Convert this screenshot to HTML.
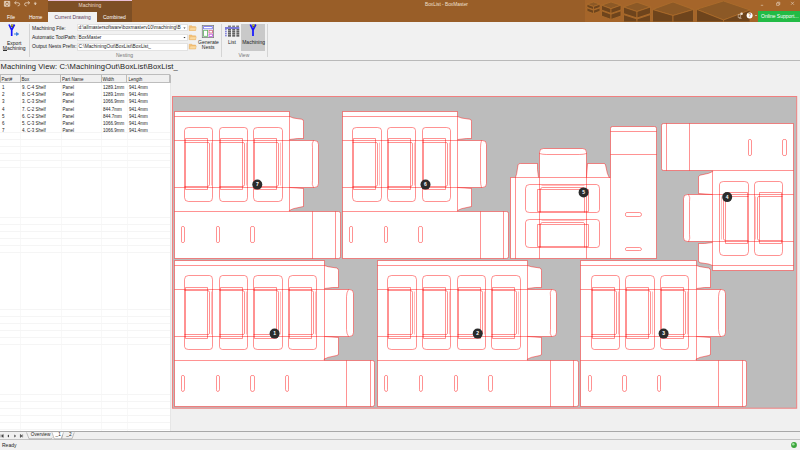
<!DOCTYPE html>
<html><head><meta charset="utf-8"><title>BoxList - BoxMaster</title>
<style>
html,body{margin:0;padding:0}
body{width:800px;height:450px;overflow:hidden;position:relative;background:#f0f0f0;font-family:"Liberation Sans",sans-serif;font-size:5px;color:#222;}
.abs,.c,span.t{position:absolute;white-space:nowrap;line-height:1}
#title{position:absolute;left:0;top:0;width:800px;height:21.8px;background:#995e28}
#deco{position:absolute;left:585px;top:0;width:215px;height:21.8px;background:#a5652a}
#ctx{position:absolute;left:47.5px;top:0;width:84.2px;height:21.8px;background:#7d4f25}
#ctxtop{position:absolute;left:47.5px;top:0;width:84.2px;height:1px;background:#e8bfd6}
#acttab{position:absolute;left:48px;top:12px;width:48.5px;height:10px;background:#f1f1f1}
.tab{color:#fff;font-size:5px}
#ribbon{position:absolute;left:0;top:21.8px;width:800px;height:38px;background:#f1f1f1;border-bottom:1px solid #b9b9b9}
.inp{position:absolute;left:77px;width:110.5px;height:7.6px;background:#fff;border:0.5px solid #e2e2e2;box-sizing:border-box}
.sep{position:absolute;top:24px;height:33px;width:0.5px;background:#d4d4d4}
.grp{color:#777}
.c{font-size:4.5px;color:#222}
.c.h{color:#222}
#tbl{position:absolute;left:0;top:74.4px;width:170px;height:357px;background:#fff;
 background-image:linear-gradient(#f3f3f3,#f3f3f3),linear-gradient(#f3f3f3,#f3f3f3),linear-gradient(#f3f3f3,#f3f3f3),linear-gradient(#f3f3f3,#f3f3f3);
 background-size:0.6px 100%;background-repeat:no-repeat;background-position:20px 0,60.5px 0,101px 0,126.5px 0;border-right:0.6px solid #e6e6e6}
#tblh{position:absolute;left:0;top:74.2px;width:170.4px;height:9.2px;background:#f0f0f0;border:0.6px solid #bdbdbd;box-sizing:border-box}
#rows{position:absolute;left:0;top:83px;width:170px;height:348px;background:repeating-linear-gradient(to bottom,transparent 0,transparent 6.58px,#f5f5f5 6.58px,#f5f5f5 7.08px)}
.draw{position:absolute;left:0;top:0}
.ln{fill:none;stroke:#ff0000;stroke-width:0.43}
.ln2{fill:none;stroke:#ff0000;stroke-width:0.25}
.dt{font-family:"Liberation Sans",sans-serif;font-size:5px;font-weight:bold;fill:#fff;text-anchor:middle}
</style></head><body>
<div id="title"></div><div id="deco"></div><div id="ctx"></div><div id="ctxtop"></div><div id="acttab"></div>
<span class="abs tab" style="left:78.5px;top:2.8px;color:#ead9c8">Machining</span>
<span class="abs tab" style="left:7px;top:14.8px">File</span>
<span class="abs tab" style="left:29px;top:14.8px">Home</span>
<span class="abs tab" style="left:54.5px;top:14.8px;color:#5a3a5a">Current Drawing</span>
<span class="abs tab" style="left:103px;top:14.8px">Combined</span>
<span class="abs tab" style="left:425px;top:2.7px;font-size:4.8px;color:#f0e0d0">BoxList - BoxMaster</span>
<div id="ribbon"></div>
<span class="abs" style="left:7px;top:40.7px">Export</span>
<span class="abs" style="left:2.8px;top:45.6px">Machining</span>
<div class="sep" style="left:28.6px"></div><div style="position:absolute;left:2.9px;top:50.2px;width:4px;height:0.5px;background:#333"></div>
<span class="abs" style="left:32px;top:26.2px">Machining File:</span>
<span class="abs" style="left:32px;top:35.2px">Automatic ToolPath:</span>
<span class="abs" style="left:32px;top:44.2px">Output Nests Prefix:</span>
<div class="inp" style="top:23.9px"></div><div class="inp" style="top:33.6px"></div><div class="inp" style="top:43.2px"></div>
<span class="abs" style="left:78.5px;top:26.3px;font-size:4.8px">d:\allmastersoftware\boxmasterv10\machining\B</span>
<span class="abs" style="left:78.5px;top:35.6px;font-size:4.8px">BoxMaster</span>
<span class="abs" style="left:78.5px;top:44.9px;font-size:4.8px">C:\MachiningOut\BoxList\BoxList_</span>
<span class="abs grp" style="left:116px;top:53.4px">Nesting</span>
<span class="abs" style="left:198px;top:40.2px">Generate</span>
<span class="abs" style="left:201.8px;top:45.4px">Nests</span>
<div class="sep" style="left:220.5px"></div>
<div style="position:absolute;left:241px;top:23.7px;width:24.4px;height:27px;background:#c9c9c9"></div>
<span class="abs" style="left:228px;top:40.2px">List</span>
<span class="abs" style="left:242.2px;top:40.2px">Machining</span>
<span class="abs grp" style="left:238.5px;top:53.4px">View</span>
<div class="sep" style="left:267px"></div>
<span class="abs" style="left:0.5px;top:63.2px;font-size:7.6px;letter-spacing:0.11px;color:#222">Machining View: C:\MachiningOut\BoxList\BoxList_</span>
<div id="tbl"></div><div id="rows"></div><div id="tblh"></div><div style="position:absolute;left:19.6px;top:74.8px;width:0.8px;height:8.2px;background:#bcbcbc"></div><div style="position:absolute;left:60.1px;top:74.8px;width:0.8px;height:8.2px;background:#bcbcbc"></div><div style="position:absolute;left:100.6px;top:74.8px;width:0.8px;height:8.2px;background:#bcbcbc"></div><div style="position:absolute;left:126.1px;top:74.8px;width:0.8px;height:8.2px;background:#bcbcbc"></div><div style="position:absolute;left:169.6px;top:74.8px;width:0.8px;height:8.2px;background:#bcbcbc"></div>
<span class="c h" style="left:1.5px;top:78px">Part#</span><span class="c h" style="left:21.5px;top:78px">Box</span><span class="c h" style="left:62px;top:78px">Part Name</span><span class="c h" style="left:102.5px;top:78px">Width</span><span class="c h" style="left:128.5px;top:78px">Length</span>
<span class="c" style="left:2.1px;top:86.30px">1</span>
<span class="c" style="left:22.1px;top:86.30px">9. C-4 Shelf</span>
<span class="c" style="left:62.6px;top:86.30px">Panel</span>
<span class="c" style="left:103.1px;top:86.30px">1289.1mm</span>
<span class="c" style="left:129.1px;top:86.30px">941.4mm</span>
<span class="c" style="left:2.1px;top:93.38px">2</span>
<span class="c" style="left:22.1px;top:93.38px">8. C-4 Shelf</span>
<span class="c" style="left:62.6px;top:93.38px">Panel</span>
<span class="c" style="left:103.1px;top:93.38px">1289.1mm</span>
<span class="c" style="left:129.1px;top:93.38px">941.4mm</span>
<span class="c" style="left:2.1px;top:100.46px">3</span>
<span class="c" style="left:22.1px;top:100.46px">3. C-3 Shelf</span>
<span class="c" style="left:62.6px;top:100.46px">Panel</span>
<span class="c" style="left:103.1px;top:100.46px">1066.9mm</span>
<span class="c" style="left:129.1px;top:100.46px">941.4mm</span>
<span class="c" style="left:2.1px;top:107.54px">4</span>
<span class="c" style="left:22.1px;top:107.54px">7. C-2 Shelf</span>
<span class="c" style="left:62.6px;top:107.54px">Panel</span>
<span class="c" style="left:103.1px;top:107.54px">844.7mm</span>
<span class="c" style="left:129.1px;top:107.54px">941.4mm</span>
<span class="c" style="left:2.1px;top:114.62px">5</span>
<span class="c" style="left:22.1px;top:114.62px">6. C-2 Shelf</span>
<span class="c" style="left:62.6px;top:114.62px">Panel</span>
<span class="c" style="left:103.1px;top:114.62px">844.7mm</span>
<span class="c" style="left:129.1px;top:114.62px">941.4mm</span>
<span class="c" style="left:2.1px;top:121.70px">6</span>
<span class="c" style="left:22.1px;top:121.70px">5. C-3 Shelf</span>
<span class="c" style="left:62.6px;top:121.70px">Panel</span>
<span class="c" style="left:103.1px;top:121.70px">1066.9mm</span>
<span class="c" style="left:129.1px;top:121.70px">941.4mm</span>
<span class="c" style="left:2.1px;top:128.78px">7</span>
<span class="c" style="left:22.1px;top:128.78px">4. C-3 Shelf</span>
<span class="c" style="left:62.6px;top:128.78px">Panel</span>
<span class="c" style="left:103.1px;top:128.78px">1066.9mm</span>
<span class="c" style="left:129.1px;top:128.78px">941.4mm</span>
<svg class="draw" width="800" height="450" viewBox="0 0 800 450">
<rect x="172.5" y="96.5" width="624.2" height="311.7" fill="#bcbcbc" stroke="#f08080" stroke-width="1"/>
<path d="M174.5,111.5L289.5,111.5L289.5,116.5L293.30,118.00L301.90,119.30Q303.5,119.5 303.5,121.5L303.5,138.5L297.5,138.5L289.5,139.5L289.5,140.5L314.5,140.5Q318.5,140.5 318.5,144.5L318.5,183.5Q318.5,187.5 314.5,187.5L289.5,187.5L303.5,188.5L303.5,206.5L301.90,206.80L293.30,208.70L289.30,210.50L289.5,211.5L338.5,211.5Q340.5,211.5 340.5,213.5L340.5,256.5Q340.5,258.5 338.5,258.5L174.5,258.5Z" fill="#fff"/>
<path d="M174.5,111.5L289.5,111.5L289.5,116.5L293.30,118.00L301.90,119.30Q303.5,119.5 303.5,121.5L303.5,138.5L297.5,138.5L289.5,139.5L289.5,140.5L314.5,140.5Q318.5,140.5 318.5,144.5L318.5,183.5Q318.5,187.5 314.5,187.5L289.5,187.5L303.5,188.5L303.5,206.5L301.90,206.80L293.30,208.70L289.30,210.50L289.5,211.5L338.5,211.5Q340.5,211.5 340.5,213.5L340.5,256.5Q340.5,258.5 338.5,258.5L174.5,258.5ZM174.5,116.5L289.5,116.5M289.5,116.5L289.5,139.5M289.5,140.5L289.5,187.5M289.5,187.5L289.5,210.5M174.5,140.5L289.5,140.5M174.5,187.5L289.5,187.5M174.5,211.5L289.5,211.5M312.5,211.5L312.5,258.5M335.5,211.5L335.5,258.5M313.5,140.5Q311.5,143.5 312.5,147.5L312.5,180.5Q311.5,184.5 313.5,187.5M188.5,127.5L209.5,127.5Q212.5,127.5 212.5,130.5L212.5,197.5Q212.5,201.5 209.5,201.5L188.5,201.5Q184.5,201.5 184.5,197.5L184.5,130.5Q184.5,127.5 188.5,127.5ZM185.5,138.5L207.5,138.5L207.5,189.5L185.5,189.5ZM184.5,142.5L207.5,142.5Q209.5,142.5 209.5,143.5L209.5,184.5Q209.5,186.5 207.5,186.5L184.5,186.5M182.5,226.5Q184.5,226.5 184.5,227.5L184.5,241.5Q184.5,242.5 182.5,242.5Q181.5,242.5 181.5,241.5L181.5,227.5Q181.5,226.5 182.5,226.5ZM222.5,127.5L244.5,127.5Q247.5,127.5 247.5,130.5L247.5,197.5Q247.5,201.5 244.5,201.5L222.5,201.5Q219.5,201.5 219.5,197.5L219.5,130.5Q219.5,127.5 222.5,127.5ZM220.5,138.5L242.5,138.5L242.5,189.5L220.5,189.5ZM219.5,142.5L242.5,142.5Q244.5,142.5 244.5,143.5L244.5,184.5Q244.5,186.5 242.5,186.5L219.5,186.5M217.5,226.5Q219.5,226.5 219.5,227.5L219.5,241.5Q219.5,242.5 217.5,242.5Q216.5,242.5 216.5,241.5L216.5,227.5Q216.5,226.5 217.5,226.5ZM257.5,127.5L278.5,127.5Q282.5,127.5 282.5,130.5L282.5,197.5Q282.5,201.5 278.5,201.5L257.5,201.5Q253.5,201.5 253.5,197.5L253.5,130.5Q253.5,127.5 257.5,127.5ZM254.5,138.5L276.5,138.5L276.5,189.5L254.5,189.5ZM253.5,142.5L276.5,142.5Q278.5,142.5 278.5,143.5L278.5,184.5Q278.5,186.5 276.5,186.5L253.5,186.5M252.5,226.5Q254.5,226.5 254.5,227.5L254.5,241.5Q254.5,242.5 252.5,242.5Q250.5,242.5 250.5,241.5L250.5,227.5Q250.5,226.5 252.5,226.5Z" class="ln"/>
<path d="M211.5,142.5L211.5,185.5M246.5,142.5L246.5,185.5M280.5,142.5L280.5,185.5" class="ln2"/>
<path d="M342.5,111.5L457.5,111.5L457.5,116.5L461.50,118.00L470.10,119.30Q471.5,119.5 471.5,121.5L471.5,138.5L466.5,138.5L457.5,139.5L457.5,140.5L482.5,140.5Q486.5,140.5 486.5,144.5L486.5,183.5Q486.5,187.5 482.5,187.5L457.5,187.5L471.5,188.5L471.5,206.5L470.10,206.80L461.50,208.70L457.50,210.50L457.5,211.5L506.5,211.5Q508.5,211.5 508.5,213.5L508.5,256.5Q508.5,258.5 506.5,258.5L342.5,258.5Z" fill="#fff"/>
<path d="M342.5,111.5L457.5,111.5L457.5,116.5L461.50,118.00L470.10,119.30Q471.5,119.5 471.5,121.5L471.5,138.5L466.5,138.5L457.5,139.5L457.5,140.5L482.5,140.5Q486.5,140.5 486.5,144.5L486.5,183.5Q486.5,187.5 482.5,187.5L457.5,187.5L471.5,188.5L471.5,206.5L470.10,206.80L461.50,208.70L457.50,210.50L457.5,211.5L506.5,211.5Q508.5,211.5 508.5,213.5L508.5,256.5Q508.5,258.5 506.5,258.5L342.5,258.5ZM342.5,116.5L457.5,116.5M457.5,116.5L457.5,139.5M457.5,140.5L457.5,187.5M457.5,187.5L457.5,210.5M342.5,140.5L457.5,140.5M342.5,187.5L457.5,187.5M342.5,211.5L457.5,211.5M480.5,211.5L480.5,258.5M503.5,211.5L503.5,258.5M481.5,140.5Q480.5,143.5 480.5,147.5L480.5,180.5Q480.5,184.5 481.5,187.5M356.5,127.5L377.5,127.5Q381.5,127.5 381.5,130.5L381.5,197.5Q381.5,201.5 377.5,201.5L356.5,201.5Q352.5,201.5 352.5,197.5L352.5,130.5Q352.5,127.5 356.5,127.5ZM353.5,138.5L375.5,138.5L375.5,189.5L353.5,189.5ZM352.5,142.5L375.5,142.5Q377.5,142.5 377.5,143.5L377.5,184.5Q377.5,186.5 375.5,186.5L352.5,186.5M351.5,226.5Q352.5,226.5 352.5,227.5L352.5,241.5Q352.5,242.5 351.5,242.5Q349.5,242.5 349.5,241.5L349.5,227.5Q349.5,226.5 351.5,226.5ZM390.5,127.5L412.5,127.5Q415.5,127.5 415.5,130.5L415.5,197.5Q415.5,201.5 412.5,201.5L390.5,201.5Q387.5,201.5 387.5,197.5L387.5,130.5Q387.5,127.5 390.5,127.5ZM388.5,138.5L410.5,138.5L410.5,189.5L388.5,189.5ZM387.5,142.5L410.5,142.5Q412.5,142.5 412.5,143.5L412.5,184.5Q412.5,186.5 410.5,186.5L387.5,186.5M385.5,226.5Q387.5,226.5 387.5,227.5L387.5,241.5Q387.5,242.5 385.5,242.5Q384.5,242.5 384.5,241.5L384.5,227.5Q384.5,226.5 385.5,226.5ZM425.5,127.5L446.5,127.5Q450.5,127.5 450.5,130.5L450.5,197.5Q450.5,201.5 446.5,201.5L425.5,201.5Q422.5,201.5 422.5,197.5L422.5,130.5Q422.5,127.5 425.5,127.5ZM423.5,138.5L445.5,138.5L445.5,189.5L423.5,189.5ZM422.5,142.5L445.5,142.5Q447.5,142.5 447.5,143.5L447.5,184.5Q447.5,186.5 445.5,186.5L422.5,186.5M420.5,226.5Q422.5,226.5 422.5,227.5L422.5,241.5Q422.5,242.5 420.5,242.5Q418.5,242.5 418.5,241.5L418.5,227.5Q418.5,226.5 420.5,226.5Z" class="ln"/>
<path d="M379.5,142.5L379.5,185.5M414.5,142.5L414.5,185.5M449.5,142.5L449.5,185.5" class="ln2"/>
<path d="M510.5,258.5L510.5,177.5L515.5,177.5L516.70,173.50L518.00,164.90Q518.5,163.5 520.5,163.5L537.5,163.5L537.5,169.5L538.5,177.5L539.5,177.5L539.5,152.5Q539.5,148.5 543.5,148.5L582.5,148.5Q586.5,148.5 586.5,152.5L586.5,177.5L587.5,163.5L604.5,163.5L605.50,164.90L607.40,173.50L609.20,177.50L610.5,177.5L610.5,128.5Q610.5,126.5 612.5,126.5L654.5,126.5Q656.5,126.5 656.5,128.5L656.5,258.5Z" fill="#fff"/>
<path d="M510.5,258.5L510.5,177.5L515.5,177.5L516.70,173.50L518.00,164.90Q518.5,163.5 520.5,163.5L537.5,163.5L537.5,169.5L538.5,177.5L539.5,177.5L539.5,152.5Q539.5,148.5 543.5,148.5L582.5,148.5Q586.5,148.5 586.5,152.5L586.5,177.5L587.5,163.5L604.5,163.5L605.50,164.90L607.40,173.50L609.20,177.50L610.5,177.5L610.5,128.5Q610.5,126.5 612.5,126.5L654.5,126.5Q656.5,126.5 656.5,128.5L656.5,258.5ZM515.5,258.5L515.5,177.5M515.5,177.5L538.5,177.5M539.5,177.5L586.5,177.5M586.5,177.5L609.5,177.5M539.5,258.5L539.5,177.5M586.5,258.5L586.5,177.5M610.5,258.5L610.5,177.5M610.5,154.5L656.5,154.5M610.5,131.5L656.5,131.5M539.5,153.5Q542.5,154.5 546.5,154.5L579.5,154.5Q583.5,154.5 586.5,153.5M525.5,244.5L525.5,222.5Q525.5,219.5 529.5,219.5L596.5,219.5Q599.5,219.5 599.5,222.5L599.5,244.5Q599.5,247.5 596.5,247.5L529.5,247.5Q525.5,247.5 525.5,244.5ZM537.5,246.5L537.5,224.5L588.5,224.5L588.5,246.5ZM540.5,247.5L540.5,224.5Q540.5,222.5 542.5,222.5L583.5,222.5Q584.5,222.5 584.5,224.5L584.5,247.5M625.5,249.5Q625.5,247.5 626.5,247.5L639.5,247.5Q641.5,247.5 641.5,249.5Q641.5,250.5 639.5,250.5L626.5,250.5Q625.5,250.5 625.5,249.5ZM525.5,209.5L525.5,188.5Q525.5,184.5 529.5,184.5L596.5,184.5Q599.5,184.5 599.5,188.5L599.5,209.5Q599.5,212.5 596.5,212.5L529.5,212.5Q525.5,212.5 525.5,209.5ZM537.5,211.5L537.5,189.5L588.5,189.5L588.5,211.5ZM540.5,212.5L540.5,189.5Q540.5,187.5 542.5,187.5L583.5,187.5Q584.5,187.5 584.5,189.5L584.5,212.5M625.5,214.5Q625.5,212.5 626.5,212.5L639.5,212.5Q641.5,212.5 641.5,214.5Q641.5,216.5 639.5,216.5L626.5,216.5Q625.5,216.5 625.5,214.5Z" class="ln"/>
<path d="M541.5,220.5L584.5,220.5M541.5,185.5L584.5,185.5" class="ln2"/>
<path d="M793.5,270.5L712.5,270.5L712.5,265.5L708.70,264.00L700.10,262.70Q698.5,262.5 698.5,260.5L698.5,243.5L704.5,243.5L712.5,242.5L712.5,241.5L687.5,241.5Q683.5,241.5 683.5,237.5L683.5,198.5Q683.5,194.5 687.5,194.5L712.5,194.5L698.5,193.5L698.5,176.5L700.10,175.20L708.70,173.30L712.70,171.50L712.5,170.5L663.5,170.5Q661.5,170.5 661.5,168.5L661.5,125.5Q661.5,123.5 663.5,123.5L793.5,123.5Z" fill="#fff"/>
<path d="M793.5,270.5L712.5,270.5L712.5,265.5L708.70,264.00L700.10,262.70Q698.5,262.5 698.5,260.5L698.5,243.5L704.5,243.5L712.5,242.5L712.5,241.5L687.5,241.5Q683.5,241.5 683.5,237.5L683.5,198.5Q683.5,194.5 687.5,194.5L712.5,194.5L698.5,193.5L698.5,176.5L700.10,175.20L708.70,173.30L712.70,171.50L712.5,170.5L663.5,170.5Q661.5,170.5 661.5,168.5L661.5,125.5Q661.5,123.5 663.5,123.5L793.5,123.5ZM793.5,265.5L712.5,265.5M712.5,265.5L712.5,242.5M712.5,241.5L712.5,194.5M712.5,194.5L712.5,171.5M793.5,241.5L712.5,241.5M793.5,194.5L712.5,194.5M793.5,170.5L712.5,170.5M689.5,170.5L689.5,123.5M666.5,170.5L666.5,123.5M688.5,241.5Q690.5,238.5 689.5,234.5L689.5,201.5Q690.5,197.5 688.5,194.5M779.5,255.5L758.5,255.5Q754.5,255.5 754.5,251.5L754.5,184.5Q754.5,181.5 758.5,181.5L779.5,181.5Q782.5,181.5 782.5,184.5L782.5,251.5Q782.5,255.5 779.5,255.5ZM781.5,243.5L759.5,243.5L759.5,192.5L781.5,192.5ZM782.5,240.5L759.5,240.5Q757.5,240.5 757.5,238.5L757.5,197.5Q757.5,196.5 759.5,196.5L782.5,196.5M784.5,155.5Q782.5,155.5 782.5,154.5L782.5,140.5Q782.5,139.5 784.5,139.5Q786.5,139.5 786.5,140.5L786.5,154.5Q786.5,155.5 784.5,155.5ZM744.5,255.5L723.5,255.5Q719.5,255.5 719.5,251.5L719.5,184.5Q719.5,181.5 723.5,181.5L744.5,181.5Q748.5,181.5 748.5,184.5L748.5,251.5Q748.5,255.5 744.5,255.5ZM747.5,243.5L725.5,243.5L725.5,192.5L747.5,192.5ZM748.5,240.5L725.5,240.5Q723.5,240.5 723.5,238.5L723.5,197.5Q723.5,196.5 725.5,196.5L748.5,196.5M749.5,155.5Q748.5,155.5 748.5,154.5L748.5,140.5Q748.5,139.5 749.5,139.5Q751.5,139.5 751.5,140.5L751.5,154.5Q751.5,155.5 749.5,155.5Z" class="ln"/>
<path d="M755.5,239.5L755.5,196.5M721.5,239.5L721.5,196.5" class="ln2"/>
<path d="M174.5,260.5L324.5,260.5L324.5,265.5L328.00,266.70L336.60,268.00Q338.5,268.5 338.5,270.5L338.5,287.5L332.5,287.5L324.5,288.5L324.5,289.5L349.5,289.5Q353.5,289.5 353.5,293.5L353.5,332.5Q353.5,336.5 349.5,336.5L324.5,336.5L338.5,337.5L338.5,354.5L336.60,355.50L328.00,357.40L324.00,359.20L324.5,360.5L372.5,360.5Q374.5,360.5 374.5,362.5L374.5,404.5Q374.5,406.5 372.5,406.5L174.5,406.5Z" fill="#fff"/>
<path d="M174.5,260.5L324.5,260.5L324.5,265.5L328.00,266.70L336.60,268.00Q338.5,268.5 338.5,270.5L338.5,287.5L332.5,287.5L324.5,288.5L324.5,289.5L349.5,289.5Q353.5,289.5 353.5,293.5L353.5,332.5Q353.5,336.5 349.5,336.5L324.5,336.5L338.5,337.5L338.5,354.5L336.60,355.50L328.00,357.40L324.00,359.20L324.5,360.5L372.5,360.5Q374.5,360.5 374.5,362.5L374.5,404.5Q374.5,406.5 372.5,406.5L174.5,406.5ZM174.5,265.5L324.5,265.5M324.5,265.5L324.5,288.5M324.5,289.5L324.5,336.5M324.5,336.5L324.5,359.5M174.5,289.5L324.5,289.5M174.5,336.5L324.5,336.5M174.5,360.5L324.5,360.5M346.5,360.5L346.5,406.5M370.5,360.5L370.5,406.5M348.5,289.5Q346.5,292.5 346.5,296.5L346.5,329.5Q346.5,333.5 348.5,336.5M188.5,275.5L209.5,275.5Q212.5,275.5 212.5,279.5L212.5,346.5Q212.5,349.5 209.5,349.5L188.5,349.5Q184.5,349.5 184.5,346.5L184.5,279.5Q184.5,275.5 188.5,275.5ZM185.5,287.5L207.5,287.5L207.5,338.5L185.5,338.5ZM184.5,290.5L207.5,290.5Q209.5,290.5 209.5,292.5L209.5,333.5Q209.5,334.5 207.5,334.5L184.5,334.5M182.5,375.5Q184.5,375.5 184.5,376.5L184.5,389.5Q184.5,391.5 182.5,391.5Q181.5,391.5 181.5,389.5L181.5,376.5Q181.5,375.5 182.5,375.5ZM222.5,275.5L244.5,275.5Q247.5,275.5 247.5,279.5L247.5,346.5Q247.5,349.5 244.5,349.5L222.5,349.5Q219.5,349.5 219.5,346.5L219.5,279.5Q219.5,275.5 222.5,275.5ZM220.5,287.5L242.5,287.5L242.5,338.5L220.5,338.5ZM219.5,290.5L242.5,290.5Q244.5,290.5 244.5,292.5L244.5,333.5Q244.5,334.5 242.5,334.5L219.5,334.5M217.5,375.5Q219.5,375.5 219.5,376.5L219.5,389.5Q219.5,391.5 217.5,391.5Q216.5,391.5 216.5,389.5L216.5,376.5Q216.5,375.5 217.5,375.5ZM257.5,275.5L278.5,275.5Q282.5,275.5 282.5,279.5L282.5,346.5Q282.5,349.5 278.5,349.5L257.5,349.5Q253.5,349.5 253.5,346.5L253.5,279.5Q253.5,275.5 257.5,275.5ZM254.5,287.5L276.5,287.5L276.5,338.5L254.5,338.5ZM253.5,290.5L276.5,290.5Q278.5,290.5 278.5,292.5L278.5,333.5Q278.5,334.5 276.5,334.5L253.5,334.5M252.5,375.5Q254.5,375.5 254.5,376.5L254.5,389.5Q254.5,391.5 252.5,391.5Q250.5,391.5 250.5,389.5L250.5,376.5Q250.5,375.5 252.5,375.5ZM292.5,275.5L313.5,275.5Q316.5,275.5 316.5,279.5L316.5,346.5Q316.5,349.5 313.5,349.5L292.5,349.5Q288.5,349.5 288.5,346.5L288.5,279.5Q288.5,275.5 292.5,275.5ZM289.5,287.5L311.5,287.5L311.5,338.5L289.5,338.5ZM288.5,290.5L311.5,290.5Q313.5,290.5 313.5,292.5L313.5,333.5Q313.5,334.5 311.5,334.5L288.5,334.5M287.5,375.5Q288.5,375.5 288.5,376.5L288.5,389.5Q288.5,391.5 287.5,391.5Q285.5,391.5 285.5,389.5L285.5,376.5Q285.5,375.5 287.5,375.5Z" class="ln"/>
<path d="M211.5,291.5L211.5,334.5M246.5,291.5L246.5,334.5M280.5,291.5L280.5,334.5M315.5,291.5L315.5,334.5" class="ln2"/>
<path d="M377.5,260.5L527.5,260.5L527.5,265.5L531.30,266.70L539.90,268.00Q541.5,268.5 541.5,270.5L541.5,287.5L535.5,287.5L527.5,288.5L527.5,289.5L552.5,289.5Q556.5,289.5 556.5,293.5L556.5,332.5Q556.5,336.5 552.5,336.5L527.5,336.5L541.5,337.5L541.5,354.5L539.90,355.50L531.30,357.40L527.30,359.20L527.5,360.5L576.5,360.5Q578.5,360.5 578.5,362.5L578.5,404.5Q578.5,406.5 576.5,406.5L377.5,406.5Z" fill="#fff"/>
<path d="M377.5,260.5L527.5,260.5L527.5,265.5L531.30,266.70L539.90,268.00Q541.5,268.5 541.5,270.5L541.5,287.5L535.5,287.5L527.5,288.5L527.5,289.5L552.5,289.5Q556.5,289.5 556.5,293.5L556.5,332.5Q556.5,336.5 552.5,336.5L527.5,336.5L541.5,337.5L541.5,354.5L539.90,355.50L531.30,357.40L527.30,359.20L527.5,360.5L576.5,360.5Q578.5,360.5 578.5,362.5L578.5,404.5Q578.5,406.5 576.5,406.5L377.5,406.5ZM377.5,265.5L527.5,265.5M527.5,265.5L527.5,288.5M527.5,289.5L527.5,336.5M527.5,336.5L527.5,359.5M377.5,289.5L527.5,289.5M377.5,336.5L527.5,336.5M377.5,360.5L527.5,360.5M550.5,360.5L550.5,406.5M573.5,360.5L573.5,406.5M551.5,289.5Q549.5,292.5 550.5,296.5L550.5,329.5Q549.5,333.5 551.5,336.5M391.5,275.5L412.5,275.5Q416.5,275.5 416.5,279.5L416.5,346.5Q416.5,349.5 412.5,349.5L391.5,349.5Q387.5,349.5 387.5,346.5L387.5,279.5Q387.5,275.5 391.5,275.5ZM388.5,287.5L410.5,287.5L410.5,338.5L388.5,338.5ZM387.5,290.5L410.5,290.5Q412.5,290.5 412.5,292.5L412.5,333.5Q412.5,334.5 410.5,334.5L387.5,334.5M386.5,375.5Q387.5,375.5 387.5,376.5L387.5,389.5Q387.5,391.5 386.5,391.5Q384.5,391.5 384.5,389.5L384.5,376.5Q384.5,375.5 386.5,375.5ZM426.5,275.5L447.5,275.5Q450.5,275.5 450.5,279.5L450.5,346.5Q450.5,349.5 447.5,349.5L426.5,349.5Q422.5,349.5 422.5,346.5L422.5,279.5Q422.5,275.5 426.5,275.5ZM423.5,287.5L445.5,287.5L445.5,338.5L423.5,338.5ZM422.5,290.5L445.5,290.5Q447.5,290.5 447.5,292.5L447.5,333.5Q447.5,334.5 445.5,334.5L422.5,334.5M420.5,375.5Q422.5,375.5 422.5,376.5L422.5,389.5Q422.5,391.5 420.5,391.5Q419.5,391.5 419.5,389.5L419.5,376.5Q419.5,375.5 420.5,375.5ZM460.5,275.5L482.5,275.5Q485.5,275.5 485.5,279.5L485.5,346.5Q485.5,349.5 482.5,349.5L460.5,349.5Q457.5,349.5 457.5,346.5L457.5,279.5Q457.5,275.5 460.5,275.5ZM458.5,287.5L480.5,287.5L480.5,338.5L458.5,338.5ZM457.5,290.5L480.5,290.5Q482.5,290.5 482.5,292.5L482.5,333.5Q482.5,334.5 480.5,334.5L457.5,334.5M455.5,375.5Q457.5,375.5 457.5,376.5L457.5,389.5Q457.5,391.5 455.5,391.5Q454.5,391.5 454.5,389.5L454.5,376.5Q454.5,375.5 455.5,375.5ZM495.5,275.5L516.5,275.5Q520.5,275.5 520.5,279.5L520.5,346.5Q520.5,349.5 516.5,349.5L495.5,349.5Q491.5,349.5 491.5,346.5L491.5,279.5Q491.5,275.5 495.5,275.5ZM492.5,287.5L514.5,287.5L514.5,338.5L492.5,338.5ZM491.5,290.5L514.5,290.5Q516.5,290.5 516.5,292.5L516.5,333.5Q516.5,334.5 514.5,334.5L491.5,334.5M490.5,375.5Q492.5,375.5 492.5,376.5L492.5,389.5Q492.5,391.5 490.5,391.5Q488.5,391.5 488.5,389.5L488.5,376.5Q488.5,375.5 490.5,375.5Z" class="ln"/>
<path d="M414.5,291.5L414.5,334.5M449.5,291.5L449.5,334.5M484.5,291.5L484.5,334.5M518.5,291.5L518.5,334.5" class="ln2"/>
<path d="M580.5,260.5L696.5,260.5L696.5,265.5L700.00,266.70L708.60,268.00Q710.5,268.5 710.5,270.5L710.5,287.5L704.5,287.5L696.5,288.5L696.5,289.5L721.5,289.5Q725.5,289.5 725.5,293.5L725.5,332.5Q725.5,336.5 721.5,336.5L696.5,336.5L710.5,337.5L710.5,354.5L708.60,355.50L700.00,357.40L696.00,359.20L696.5,360.5L744.5,360.5Q746.5,360.5 746.5,362.5L746.5,404.5Q746.5,406.5 744.5,406.5L580.5,406.5Z" fill="#fff"/>
<path d="M580.5,260.5L696.5,260.5L696.5,265.5L700.00,266.70L708.60,268.00Q710.5,268.5 710.5,270.5L710.5,287.5L704.5,287.5L696.5,288.5L696.5,289.5L721.5,289.5Q725.5,289.5 725.5,293.5L725.5,332.5Q725.5,336.5 721.5,336.5L696.5,336.5L710.5,337.5L710.5,354.5L708.60,355.50L700.00,357.40L696.00,359.20L696.5,360.5L744.5,360.5Q746.5,360.5 746.5,362.5L746.5,404.5Q746.5,406.5 744.5,406.5L580.5,406.5ZM580.5,265.5L696.5,265.5M696.5,265.5L696.5,288.5M696.5,289.5L696.5,336.5M696.5,336.5L696.5,359.5M580.5,289.5L696.5,289.5M580.5,336.5L696.5,336.5M580.5,360.5L696.5,360.5M718.5,360.5L718.5,406.5M742.5,360.5L742.5,406.5M720.5,289.5Q718.5,292.5 718.5,296.5L718.5,329.5Q718.5,333.5 720.5,336.5M594.5,275.5L616.5,275.5Q619.5,275.5 619.5,279.5L619.5,346.5Q619.5,349.5 616.5,349.5L594.5,349.5Q591.5,349.5 591.5,346.5L591.5,279.5Q591.5,275.5 594.5,275.5ZM592.5,287.5L614.5,287.5L614.5,338.5L592.5,338.5ZM591.5,290.5L614.5,290.5Q616.5,290.5 616.5,292.5L616.5,333.5Q616.5,334.5 614.5,334.5L591.5,334.5M589.5,375.5Q591.5,375.5 591.5,376.5L591.5,389.5Q591.5,391.5 589.5,391.5Q588.5,391.5 588.5,389.5L588.5,376.5Q588.5,375.5 589.5,375.5ZM629.5,275.5L650.5,275.5Q654.5,275.5 654.5,279.5L654.5,346.5Q654.5,349.5 650.5,349.5L629.5,349.5Q625.5,349.5 625.5,346.5L625.5,279.5Q625.5,275.5 629.5,275.5ZM626.5,287.5L648.5,287.5L648.5,338.5L626.5,338.5ZM625.5,290.5L648.5,290.5Q650.5,290.5 650.5,292.5L650.5,333.5Q650.5,334.5 648.5,334.5L625.5,334.5M624.5,375.5Q626.5,375.5 626.5,376.5L626.5,389.5Q626.5,391.5 624.5,391.5Q622.5,391.5 622.5,389.5L622.5,376.5Q622.5,375.5 624.5,375.5ZM664.5,275.5L685.5,275.5Q688.5,275.5 688.5,279.5L688.5,346.5Q688.5,349.5 685.5,349.5L664.5,349.5Q660.5,349.5 660.5,346.5L660.5,279.5Q660.5,275.5 664.5,275.5ZM661.5,287.5L683.5,287.5L683.5,338.5L661.5,338.5ZM660.5,290.5L683.5,290.5Q685.5,290.5 685.5,292.5L685.5,333.5Q685.5,334.5 683.5,334.5L660.5,334.5M659.5,375.5Q660.5,375.5 660.5,376.5L660.5,389.5Q660.5,391.5 659.5,391.5Q657.5,391.5 657.5,389.5L657.5,376.5Q657.5,375.5 659.5,375.5Z" class="ln"/>
<path d="M618.5,291.5L618.5,334.5M652.5,291.5L652.5,334.5M687.5,291.5L687.5,334.5" class="ln2"/>
<circle cx="257.3" cy="184.6" r="5" fill="#2b2b2b"/><text x="257.3" y="186.29999999999998" class="dt">7</text>
<circle cx="425.5" cy="184.6" r="5" fill="#2b2b2b"/><text x="425.5" y="186.29999999999998" class="dt">6</text>
<circle cx="583.6" cy="192.4" r="5" fill="#2b2b2b"/><text x="583.6" y="194.1" class="dt">5</text>
<circle cx="727.2" cy="197.1" r="5" fill="#2b2b2b"/><text x="727.2" y="198.79999999999998" class="dt">4</text>
<circle cx="274.6" cy="333.6" r="5" fill="#2b2b2b"/><text x="274.6" y="335.3" class="dt">1</text>
<circle cx="477.7" cy="333.6" r="5" fill="#2b2b2b"/><text x="477.7" y="335.3" class="dt">2</text>
<circle cx="663.6" cy="333.6" r="5" fill="#2b2b2b"/><text x="663.6" y="335.3" class="dt">3</text>
</svg>
<div style="position:absolute;left:0;top:431.2px;width:800px;height:1.2px;background:#a8a8a8"></div>
<div style="position:absolute;left:0;top:432.4px;width:800px;height:7.2px;background:#f0f0f0"></div>
<div style="position:absolute;left:0;top:439.2px;width:800px;height:0.9px;background:#c4c4c4"></div>
<div style="position:absolute;left:0;top:440.3px;width:800px;height:9.7px;background:#f1f1f1"></div>
<span class="abs" style="left:2px;top:443px">Ready</span>
<div style="position:absolute;left:758.3px;top:11px;width:41.7px;height:10.5px;background:#22bb46"></div>
<span class="abs" style="left:761px;top:13.8px;color:#fff;font-size:5px">Online Support...</span>
<svg class="draw" width="800" height="450" viewBox="0 0 800 450">
<!-- deco boxes -->
<clipPath id="tc"><rect x="0" y="0" width="800" height="21.8"/></clipPath><g clip-path="url(#tc)" fill="#6e441c" stroke="#ad6d2c" stroke-width="0.8" stroke-linejoin="round">
<path d="M587,4.2 L593.5,2 L600,4.2 L593.5,6.5 Z" fill="#8c5926"/><path d="M587,4.2 L593.5,6.5 V9.6 L587,7.3 Z"/><path d="M593.5,6.5 L600,4.2 V7.3 L593.5,9.6 Z"/>
<path d="M587,7.9 L593.5,10.2 V13.6 L587,11.2 Z"/><path d="M593.5,10.2 L600,7.9 V11.2 L593.5,13.6 Z"/>
<path d="M601.5,5.2 L611,2 L621,5.2 L611,8.7 Z" fill="#8c5926"/><path d="M601.5,5.2 L611,8.7 V13.4 L601.5,10 Z"/><path d="M611,8.7 L621,5.2 V10 L611,13.4 Z"/>
<path d="M601.5,10.8 L611,14.2 V19.4 L601.5,16 Z"/><path d="M611,14.2 L621,10.8 V16 L611,19.4 Z"/>
<path d="M623.5,7 L637,2.2 L650.5,7 L637,11.5 Z" fill="#8c5926"/><path d="M623.5,7 L637,11.5 V18 L623.5,13.6 Z"/><path d="M637,11.5 L650.5,7 V13.6 L637,18 Z"/>
<path d="M623.5,14.6 L637,19 V22 L623.5,22 Z"/><path d="M637,19 L650.5,14.6 V22 L637,22 Z"/>
<path d="M652.5,9.5 L673,2 L693.5,9.5 L673,15.5 Z" fill="#8c5926"/><path d="M652.5,9.5 L673,15.5 V22 L652.5,22 Z"/><path d="M673,15.5 L693.5,9.5 V22 L673,22 Z"/>
<path d="M696.5,9.3 L723.5,1 L750,10 L723.5,20 Z" fill="#8c5926"/><path d="M696.5,9.3 L723.5,20 V22 L696.5,22 Z"/><path d="M723.5,20 L750,10 V22 L723.5,22 Z"/>
</g>
<!-- quick access -->
<g fill="none" stroke="#f3e6d8" stroke-width="0.8">
<path d="M4.4,1.4 H9.7 V6.2 H4.4 Z M5.4,1.4 V3.3 H8.7 V1.4 M5.6,6.2 V4.6 H8.5 V6.2"/>
<path d="M14.6,2.8 H18 Q19.7,2.8 19.7,4.4 Q19.7,5.9 17.6,5.9 M16.3,1.2 L14.6,2.8 L16.3,4.4" stroke="#e8d3bd"/>
<path d="M29.6,2.8 H26.2 Q24.5,2.8 24.5,4.4 Q24.5,5.9 26.6,5.9 M27.9,1.2 L29.6,2.8 L27.9,4.4" stroke="#e8d3bd"/>
</g>
<path d="M34.4,2.4 H36.2 M34.3,3.6 H36.3 L35.3,4.8 Z" fill="#f3e6d8" stroke="#f3e6d8" stroke-width="0.5"/>
<!-- window controls -->
<g fill="none" stroke="#e6d2bd" stroke-width="0.6">
<path d="M760.8,5.3 H763.2"/>
<path d="M776.6,3 H779 V5.4 H776.6 Z M777.4,3 V2.2 H779.8 V4.6 H779"/>
<path d="M791,1.8 L794,4.8 M794,1.8 L791,4.8"/>
</g>
<!-- help -->
<path d="M738.2,14.6 H740.6 V17.6 H738.2 Z M739.4,17.6 V18.4 H741.6" fill="none" stroke="#f3e6d8" stroke-width="0.5"/>
<circle cx="741.6" cy="13.8" r="1.3" fill="#f3e6d8"/>
<circle cx="749.6" cy="15.4" r="3" fill="#fff"/>
<text x="749.6" y="17.1" font-size="4.6" font-weight="bold" text-anchor="middle" fill="#995e28" font-family="Liberation Sans, sans-serif">?</text>
<path d="M755,15 H757 L756,16.1 Z" fill="#fff"/>
<!-- export machining icon -->
<g id="yicon" transform="translate(0,-0.9)">
<path d="M9,25.4 L11.7,31 V37 M14.5,25.4 L11.7,31" fill="none" stroke="#1414ff" stroke-width="1.7" stroke-linejoin="round"/>
<rect x="11" y="25.3" width="2.3" height="2.8" fill="#6b6b2a"/><rect x="11.5" y="25.6" width="1.4" height="1.2" fill="#c8c040"/>
</g>
<path d="M14,34 H17.3 M16.5,32.6 L18.6,34 L16.5,35.4 Z" fill="#3b7fe0" stroke="#3b7fe0" stroke-width="1"/>
<use href="#yicon" x="241.3" y="0"/>
<!-- folders -->
<g id="fold"><path d="M189.2,25.8 H191.8 L192.4,26.6 H195.6 V30.4 H189.2 Z" fill="#f3c27a" stroke="#e7a750" stroke-width="0.4"/><path d="M189.2,30.4 L190.3,27.6 H196.3 L195.6,30.4 Z" fill="#fad9a0" stroke="#e7a750" stroke-width="0.3"/></g>
<use href="#fold" y="9.2"/><use href="#fold" y="18.4"/>
<!-- dropdown arrows -->
<path d="M183.4,27.6 H185.6 L184.5,28.8 Z M183.4,37 H185.6 L184.5,38.2 Z" fill="#333"/>
<!-- generate nests -->
<rect x="202.3" y="25.4" width="11.3" height="12.2" fill="#fff" stroke="#7d7d7d" stroke-width="0.8"/>
<rect x="203.6" y="26.6" width="8.7" height="2.2" fill="#fff" stroke="#6a6af0" stroke-width="0.8"/>
<rect x="203.6" y="30.3" width="4" height="6" fill="#fff" stroke="#5fb05f" stroke-width="0.8"/>
<rect x="209" y="30.3" width="3.4" height="2.7" fill="#fff" stroke="#d0607a" stroke-width="0.8"/>
<rect x="209" y="34.2" width="3.4" height="2.2" fill="#fff" stroke="#c050e0" stroke-width="0.8"/>
<!-- list icon -->
<path d="M228,26.2 H231 M232.2,26.2 H235 M236.2,26.2 H239" stroke="#222" stroke-width="0.8"/>
<path d="M225,28 H239.3" stroke="#1818c0" stroke-width="1.1"/>
<g stroke="#333" stroke-width="1.2"><path d="M228,29.8 H231 M232.2,29.8 H235.2 M236.4,29.8 H239.3 M228,31.8 H231 M232.2,31.8 H235.2 M236.4,31.8 H239.3 M228,33.8 H231 M232.2,33.8 H235.2 M236.4,33.8 H239.3 M228,35.8 H231 M232.2,35.8 H235.2 M236.4,35.8 H239.3"/></g>
<path d="M225.2,29.8 H226.6 M225.2,31.8 H226.6 M225.2,33.8 H226.6 M225.2,35.8 H226.6" stroke="#4040d0" stroke-width="1.1"/>
<!-- bottom tab nav -->
<g fill="#333"><path d="M1,434.4 V437.4 M3.2,434.4 L1.6,435.9 L3.2,437.4 Z" stroke="#333" stroke-width="0.5"/><path d="M9,434.4 L7.4,435.9 L9,437.4 Z"/><path d="M14.4,434.4 L16,435.9 L14.4,437.4 Z"/><path d="M20.4,434.4 L22,435.9 L20.4,437.4 Z M22.6,434.4 V437.4" stroke="#333" stroke-width="0.5"/></g>
<path d="M52,432.4 L54.2,438.8 H61.2 L63.5,432.4" fill="#fff" stroke="#888" stroke-width="0.5"/>
<path d="M26.5,432.4 L29,438.8 H50.6 Q52,438.8 52.3,437.6" fill="none" stroke="#888" stroke-width="0.5"/>
<path d="M62.6,434.8 L61.6,438.8 H72 L74.3,432.4" fill="none" stroke="#888" stroke-width="0.5"/>
<!-- status icon -->
<circle cx="794" cy="445" r="2.9" fill="#3aa53a"/><circle cx="793.3" cy="444.2" r="1.3" fill="#9fe09f"/>
</svg>
<span class="abs" style="left:30.8px;top:433.4px;font-size:4.7px">Overview</span>
<span class="abs" style="left:55.6px;top:433.4px;font-size:4.7px">_1</span>
<span class="abs" style="left:66.3px;top:433.4px;font-size:4.7px">_2</span>
</body></html>
